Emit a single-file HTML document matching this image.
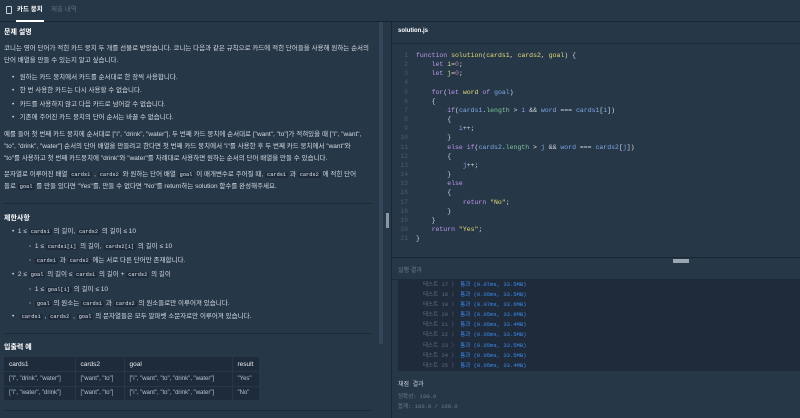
<!DOCTYPE html>
<html><head><meta charset="utf-8"><style>
*{margin:0;padding:0;box-sizing:border-box}
body{width:800px;height:418px;overflow:hidden;background:#263747;font-family:"Liberation Sans","Noto Sans CJK KR",sans-serif;color:#d4dbe3;position:relative}
.abs{position:absolute;white-space:nowrap}
.top{position:absolute;left:0;top:0;width:800px;height:22px;background:#263747;border-bottom:1px solid #1a2633}
.t{font-size:6.5px;line-height:12px}
code,.m{font-family:"Liberation Mono","Noto Sans CJK KR",monospace}
code{background:#1e2b3a;border-radius:2px;padding:0 2px;font-size:5.3px;color:#dfe5ec}
.h{font-weight:bold;font-size:7px;color:#fff}
.hr{position:absolute;height:1px;background:#1c2836}
table{border-collapse:collapse;font-size:6px;background:#1e2b3a;color:#b6c2cf}
td{border-right:1px solid #263747;border-bottom:1px solid #263747;height:14.5px;padding:0 5px}
.code{position:absolute;left:394px;top:51px;font-family:"Liberation Mono",monospace;font-size:6.5px;line-height:9.15px;white-space:pre;color:#d4dbe3}
.ln{color:#4a5b6d;display:inline-block;width:14px;text-align:right;margin-right:8px}
.k{color:#c396ed}.f{color:#e6db74}.v{color:#7fa8e8}.g{color:#7ec699}.s{color:#e6db74}.n{color:#c97b9b}
.res{position:absolute;left:398px;top:280px;width:402px;height:91px;background:#1f2a3b;font-family:"Liberation Mono","Noto Sans CJK KR",monospace;font-size:5.5px;line-height:10.1px;color:#5d6e80;padding:0 0 0 25px;white-space:pre}
.res b{color:#3b8ef0;font-weight:normal}
</style></head><body>
<div class="top">
<div class="abs" style="left:6px;top:6px;width:6px;height:8px;border:1px solid #c8d0da;border-radius:1px"></div>
<div class="abs t" style="left:17px;top:4px;font-weight:bold;color:#fff">카드 뭉치</div>
<div class="abs t" style="left:51px;top:4px;color:#5f7184">제출 내역</div>
<div class="abs" style="left:16px;top:20px;width:28px;height:2px;background:#fff"></div>
</div>
<!-- left -->
<div class="abs h" style="left:4px;top:27px">문제 설명</div>
<div class="abs t" style="left:4px;top:43px;color:#d4dbe3">코니는 영어 단어가 적힌 카드 뭉치 두 개를 선물로 받았습니다. 코니는 다음과 같은 규칙으로 카드에 적힌 단어들을 사용해 원하는 순서의</div>
<div class="abs t" style="left:4px;top:55px">단어 배열을 만들 수 있는지 알고 싶습니다.</div>
<div class="abs t" style="left:12px;top:72px">•&nbsp;&nbsp; 원하는 카드 뭉치에서 카드를 순서대로 한 장씩 사용합니다.</div>
<div class="abs t" style="left:12px;top:85px">•&nbsp;&nbsp; 한 번 사용한 카드는 다시 사용할 수 없습니다.</div>
<div class="abs t" style="left:12px;top:99px">•&nbsp;&nbsp; 카드를 사용하지 않고 다음 카드로 넘어갈 수 없습니다.</div>
<div class="abs t" style="left:12px;top:112px">•&nbsp;&nbsp; 기존에 주어진 카드 뭉치의 단어 순서는 바꿀 수 없습니다.</div>
<div class="abs t" style="left:4px;top:129px">예를 들어 첫 번째 카드 뭉치에 순서대로 ["i", "drink", "water"], 두 번째 카드 뭉치에 순서대로 ["want", "to"]가 적혀있을 때 ["i", "want",</div>
<div class="abs t" style="left:4px;top:141px">"to", "drink", "water"] 순서의 단어 배열을 만들려고 한다면 첫 번째 카드 뭉치에서 "i"를 사용한 후 두 번째 카드 뭉치에서 "want"와</div>
<div class="abs t" style="left:4px;top:153px">"to"를 사용하고 첫 번째 카드뭉치에 "drink"와 "water"를 차례대로 사용하면 원하는 순서의 단어 배열을 만들 수 있습니다.</div>
<div class="abs t" style="left:4px;top:169px">문자열로 이루어진 배열 <code>cards1</code> , <code>cards2</code> 와 원하는 단어 배열 <code>goal</code> 이 매개변수로 주어질 때, <code>cards1</code> 과 <code>cards2</code> 에 적힌 단어</div>
<div class="abs t" style="left:4px;top:181px">들로 <code>goal</code> 를 만들 있다면 "Yes"를, 만들 수 없다면 "No"를 return하는 solution 함수를 완성해주세요.</div>
<div class="hr" style="left:4px;top:203px;width:368px"></div>
<div class="abs h" style="left:4px;top:213px">제한사항</div>
<div class="abs t" style="left:12px;top:226px">•&nbsp; 1 ≤ <code>cards1</code> 의 길이, <code>cards2</code> 의 길이 ≤ 10</div>
<div class="abs t" style="left:29px;top:241px">◦&nbsp; 1 ≤ <code>cards1[i]</code> 의 길이, <code>cards2[i]</code> 의 길이 ≤ 10</div>
<div class="abs t" style="left:29px;top:255px">◦&nbsp; <code>cards1</code> 과 <code>cards2</code> 에는 서로 다른 단어만 존재합니다.</div>
<div class="abs t" style="left:12px;top:269px">•&nbsp; 2 ≤ <code>goal</code> 의 길이 ≤ <code>cards1</code> 의 길이 + <code>cards2</code> 의 길이</div>
<div class="abs t" style="left:29px;top:284px">◦&nbsp; 1 ≤ <code>goal[i]</code> 의 길이 ≤ 10</div>
<div class="abs t" style="left:29px;top:298px">◦&nbsp; <code>goal</code> 의 원소는 <code>cards1</code> 과 <code>cards2</code> 의 원소들로만 이루어져 있습니다.</div>
<div class="abs t" style="left:12px;top:311px">•&nbsp;&nbsp; <code>cards1</code> , <code>cards2</code> , <code>goal</code> 의 문자열들은 모두 알파벳 소문자로만 이루어져 있습니다.</div>
<div class="hr" style="left:4px;top:333px;width:368px"></div>
<div class="abs h" style="left:4px;top:342px">입출력 예</div>
<table class="abs" style="left:4px;top:357px">
<tr style="color:#e6ebf0;font-size:6.5px"><td style="width:71px">cards1</td><td style="width:49px">cards2</td><td style="width:108px">goal</td><td style="width:27px">result</td></tr>
<tr><td>["i", "drink", "water"]</td><td>["want", "to"]</td><td>["i", "want", "to", "drink", "water"]</td><td>"Yes"</td></tr>
<tr><td>["i", "water", "drink"]</td><td>["want", "to"]</td><td>["i", "want", "to", "drink", "water"]</td><td>"No"</td></tr>
</table>
<div class="hr" style="left:4px;top:410px;width:368px"></div>
<!-- scrollbar and divider -->
<div class="abs" style="left:379px;top:22px;width:4px;height:322px;background:#34465a"></div>
<div class="abs" style="left:391px;top:22px;width:1px;height:396px;background:#1a2633"></div>
<div class="abs" style="left:386px;top:213px;width:3px;height:15px;background:#8a96a3"></div>
<!-- right -->
<div class="abs" style="left:392px;top:22px;width:408px;height:22px;border-bottom:1px solid #1e2b39"></div>
<div class="abs" style="left:398px;top:28px;font-size:6px;font-weight:bold;color:#fff">solution.js</div>
<div class="code"><span class="ln">1</span><span class="k">function</span> <span class="f">solution</span>(<span class="f">cards1</span>, <span class="f">cards2</span>, <span class="f">goal</span>) {
<span class="ln">2</span>    <span class="k">let</span> <span class="f">i</span>=<span class="n">0</span>;
<span class="ln">3</span>    <span class="k">let</span> <span class="f">j</span>=<span class="n">0</span>;
<span class="ln">4</span>
<span class="ln">5</span>    <span class="k">for</span>(<span class="k">let</span> <span class="f">word</span> <span class="k">of</span> <span class="v">goal</span>)
<span class="ln">6</span>    {
<span class="ln">7</span>        <span class="k">if</span>(<span class="v">cards1</span>.<span class="g">length</span> &gt; <span class="v">i</span> &amp;&amp; <span class="v">word</span> === <span class="v">cards1</span>[<span class="v">i</span>])
<span class="ln">8</span>        {
<span class="ln">9</span>           <span class="v">i</span>++;
<span class="ln">10</span>        }
<span class="ln">11</span>        <span class="k">else if</span>(<span class="v">cards2</span>.<span class="g">length</span> &gt; <span class="v">j</span> &amp;&amp; <span class="v">word</span> === <span class="v">cards2</span>[<span class="v">j</span>])
<span class="ln">12</span>        {
<span class="ln">13</span>            <span class="v">j</span>++;
<span class="ln">14</span>        }
<span class="ln">15</span>        <span class="k">else</span>
<span class="ln">16</span>        {
<span class="ln">17</span>            <span class="k">return</span> <span class="s">"No"</span>;
<span class="ln">18</span>        }
<span class="ln">19</span>    }
<span class="ln">20</span>    <span class="k">return</span> <span class="s">"Yes"</span>;
<span class="ln">21</span>}</div>
<div class="abs" style="left:392px;top:257px;width:408px;height:1px;background:#1a2633"></div>
<div class="abs" style="left:392px;top:258px;width:408px;height:22px;background:#263747;border-bottom:1px solid #1e2b39"></div>
<div class="abs" style="left:673px;top:259px;width:16px;height:4px;background:#9aa6b2"></div>
<div class="abs" style="left:398px;top:265px;font-size:6px;color:#6d7d8f">실행 결과</div>
<div class="res">테스트 17 〉 <b>통과 (0.07ms, 33.5MB)</b>
테스트 18 〉 <b>통과 (0.05ms, 33.5MB)</b>
테스트 19 〉 <b>통과 (0.07ms, 33.6MB)</b>
테스트 20 〉 <b>통과 (0.05ms, 33.6MB)</b>
테스트 21 〉 <b>통과 (0.05ms, 33.4MB)</b>
테스트 22 〉 <b>통과 (0.05ms, 33.5MB)</b>
테스트 23 〉 <b>통과 (0.05ms, 33.5MB)</b>
테스트 24 〉 <b>통과 (0.05ms, 33.5MB)</b>
테스트 25 〉 <b>통과 (0.05ms, 33.4MB)</b></div>
<div class="abs m" style="left:398px;top:379px;font-size:6px;color:#c5ced8">채점 결과</div>
<div class="abs m" style="left:398px;top:392px;font-size:5.5px;color:#6d7d8f">정확성: 100.0</div>
<div class="abs m" style="left:398px;top:402px;font-size:5.5px;color:#6d7d8f">합계: 100.0 / 100.0</div>
</body></html>
